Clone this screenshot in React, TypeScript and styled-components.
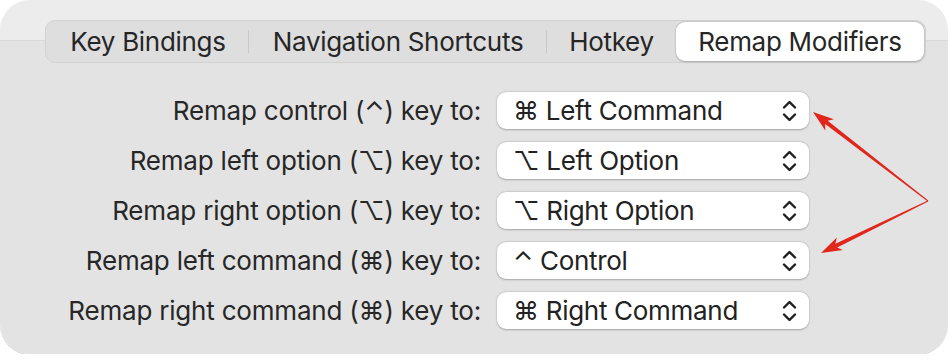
import React from "react"
import styled, {createGlobalStyle} from "styled-components"

const GlobalStyle = createGlobalStyle`
  html, body {
    margin: 0;
    padding: 0;
    background: #ffffff;
  }
  body {
    font-family: Inter, "DejaVu Sans", sans-serif;
    -webkit-font-smoothing: antialiased;
  }
`

const tabs = [
    {title: "Key Bindings", width: 202},
    {title: "Navigation Shortcuts", width: 298},
    {title: "Hotkey", width: 129},
    {title: "Remap Modifiers", width: 248},
]
const activeTab = 3

const rows = [
    {label: "Remap control (\u2303) key to:", value: "\u2318 Left Command"},
    {label: "Remap left option (\u2325) key to:", value: "\u2325 Left Option"},
    {label: "Remap right option (\u2325) key to:", value: "\u2325 Right Option"},
    {label: "Remap left command (\u2318) key to:", value: "\u2303 Control"},
    {label: "Remap right command (\u2318) key to:", value: "\u2318 Right Command"},
]

// tapered red annotation arrow, from a thin tail to a filled head
function arrowPoints(fx: number, fy: number, tx: number, ty: number) {
    const dx = tx - fx
    const dy = ty - fy
    const len = Math.hypot(dx, dy)
    const ux = dx / len
    const uy = dy / len
    const nx = -uy
    const ny = ux
    const head = 21
    const half = 7
    const notch = 4
    const bx = tx - ux * head
    const by = ty - uy * head
    const nxb = bx + ux * notch
    const nyb = by + uy * notch
    const p = (x: number, y: number) => `${x.toFixed(1)},${y.toFixed(1)}`
    return [
        p(fx + nx * 0.5, fy + ny * 0.5),
        p(nxb + nx * 2.1, nyb + ny * 2.1),
        p(bx + nx * half, by + ny * half),
        p(tx, ty),
        p(bx - nx * half, by - ny * half),
        p(nxb - nx * 2.1, nyb - ny * 2.1),
        p(fx - nx * 0.5, fy - ny * 0.5),
    ].join(" ")
}

export default function App() {
    return (
        <>
            <GlobalStyle/>
            <Window>
                <TabBar>
                    {tabs.map((tab, i) => (
                        <Tab
                            key={tab.title}
                            $width={tab.width}
                            $active={i === activeTab}
                            $divider={i < tabs.length - 1 && i !== activeTab && i + 1 !== activeTab}
                        >
                            {tab.title}
                        </Tab>
                    ))}
                </TabBar>
                <Form>
                    {rows.map(row => (
                        <React.Fragment key={row.label}>
                            <Label>{row.label}</Label>
                            <Select>
                                <span>{row.value}</span>
                                <svg width="15" height="24" viewBox="0 0 15 24">
                                    <path d="M2 8.5 L7.5 3 L13 8.5 M2 15.5 L7.5 21 L13 15.5"
                                          fill="none" stroke="#1f1f1f" strokeWidth="2.4"
                                          strokeLinecap="round" strokeLinejoin="round"/>
                                </svg>
                            </Select>
                        </React.Fragment>
                    ))}
                </Form>
                <Annotations width="948" height="354" viewBox="0 0 948 354">
                    <polygon points={arrowPoints(928, 201, 813, 112)} fill="#e1261b"/>
                    <polygon points={arrowPoints(928, 201, 821, 253)} fill="#e1261b"/>
                </Annotations>
            </Window>
        </>
    )
}

const Window = styled.div`
  position: relative;
  width: 948px;
  height: 354px;
  border-radius: 30px;
  overflow: hidden;
  background: linear-gradient(#ececec 0 40px, #d9d9d9 40px 41px, #e3e3e3 41px);
  box-shadow: 0 1px 0 #d6d6d6;
`
const TabBar = styled.div`
  display: flex;
  width: fit-content;
  margin: 20px 0 0 45px;
  padding: 1px;
  background: #dedede;
  border: 1px solid #d2d2d2;
  border-radius: 10px;
`
const Tab = styled.div<{ $width: number, $active: boolean, $divider: boolean }>`
  position: relative;
  width: ${p => p.$width}px;
  height: 39px;
  display: flex;
  align-items: center;
  justify-content: center;
  font-size: 26px;
  letter-spacing: -0.3px;
  color: #262626;
  border-radius: 9px;
  background: ${p => p.$active ? "#ffffff" : "transparent"};
  box-shadow: ${p => p.$active ? "0 0.5px 2px rgba(0,0,0,0.22), 0 0 0 0.5px rgba(0,0,0,0.08)" : "none"};

  &::after {
    content: "";
    display: ${p => p.$divider ? "block" : "none"};
    position: absolute;
    right: 0;
    top: 8px;
    width: 1px;
    height: 23px;
    background: #c9c9c9;
  }
`
const Form = styled.div`
  display: grid;
  grid-template-columns: 481px 312px;
  column-gap: 16px;
  row-gap: 13px;
  margin-top: 29px;
  align-items: center;
`
const Label = styled.div`
  text-align: right;
  font-size: 26px;
  letter-spacing: -0.2px;
  color: #272727;
  white-space: nowrap;
`
const Select = styled.div`
  height: 37px;
  display: flex;
  align-items: center;
  justify-content: space-between;
  padding: 0 12px 0 16px;
  background: #ffffff;
  border-radius: 9px;
  box-shadow: 0 0.5px 2px rgba(0, 0, 0, 0.25), 0 0 0 0.5px rgba(0, 0, 0, 0.06);
  font-size: 26px;
  letter-spacing: -0.3px;
  color: #222222;
  white-space: nowrap;
`
const Annotations = styled.svg`
  position: absolute;
  left: 0;
  top: 0;
  pointer-events: none;
`
